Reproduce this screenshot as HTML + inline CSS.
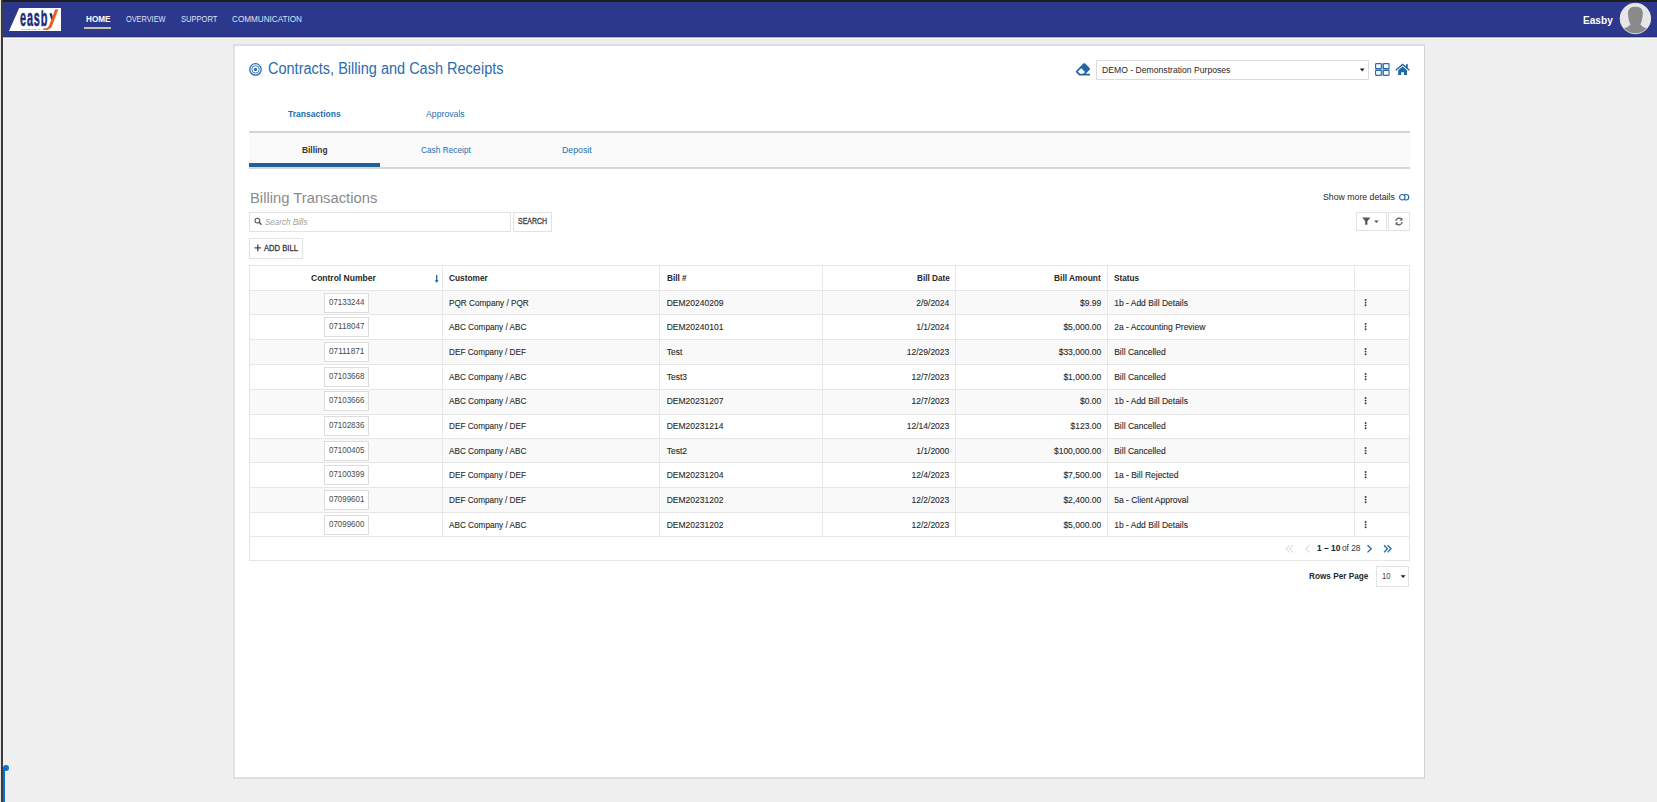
<!DOCTYPE html>
<html><head><meta charset="utf-8">
<style>
*{box-sizing:border-box}
html,body{margin:0;padding:0}
body{width:1657px;height:802px;overflow:hidden;position:relative;background:#efefef;font-family:"Liberation Sans",sans-serif;color:#333}
.a{position:absolute}
.t{position:absolute;white-space:nowrap;line-height:1.149;transform-origin:0 0}
#hdr{left:3px;top:2px;width:1654px;height:35px;background:#2c388c;border-bottom:1px solid #222f80}
#card{left:233px;top:44px;width:1192px;height:735px;background:#fff;border:2px solid #dedede;border-left-color:#e2e2e2;border-right:1px solid #d4d4d4}
.row{position:absolute;left:249px;width:1161px}
.hl{position:absolute;left:249px;width:1161px;height:1px;background:#e6e6e6}
.cbox{position:absolute;left:324px;width:45px;height:19px;border:1px solid #dcdcdc;background:#fff}
.dots{position:absolute;left:1364.8px;width:2px}
.dots i{display:block;width:1.8px;height:1.8px;background:#444;border-radius:50%;margin-bottom:0.8px}
.vl{position:absolute;width:1px;background:#e9e9e9}
.box{position:absolute;border:1px solid #e2e2e2;background:#fff}
</style></head><body>
<!-- frame -->
<div class="a" style="left:0;top:0;width:1657px;height:2px;background:#1e1e1e"></div>
<div class="a" style="left:0;top:0;width:1px;height:802px;background:#e6e6e6"></div>
<div class="a" style="left:1px;top:0;width:2px;height:802px;background:#3b3b3b"></div>
<div class="a" id="hdr"></div>
<div class="a" style="left:3px;top:37px;width:1654px;height:1px;background:#b4b8cf"></div>
<div class="a" style="left:3px;top:38px;width:1654px;height:1px;background:#fbfbf6"></div>
<!-- logo -->
<svg class="a" style="left:0;top:0" width="80" height="40" viewBox="0 0 80 40">
  <polygon points="19.2,8 61,8 61,31.1 9,31.1" fill="#ffffff"/>
  <clipPath id="lc"><rect x="0" y="10.2" width="80" height="30"/></clipPath>
  <g clip-path="url(#lc)">
    <text x="0" y="0" transform="translate(20.0 26.3) scale(0.5 1.1)" font-family="Liberation Sans" font-weight="bold" font-size="21.7" fill="#1a2a7c" stroke="#1a2a7c" stroke-width="0.5" letter-spacing="1.7">easb</text>
  </g>
  <path d="M49.4,13.2 L51.9,13.2 L53.2,18.6 L51.8,21.4 Z" fill="#1a2a7c"/>
  <path d="M55.1,9.5 L58.3,9.2 L52.2,25.6 Q50.9,29.6 46.4,29.9 L43,30.1 L43.6,28.6 L46.2,28.2 Q48.6,27.6 49.5,24.6 Z" fill="#f05a1e"/>
  <text x="20.8" y="29.7" font-family="Liberation Sans" font-size="2.4" fill="#5a66a8" textLength="20.8" lengthAdjust="spacingAndGlyphs">MAKES IT EASY</text>
</svg>
<div class="a" style="left:84.1px;top:27px;width:27px;height:2px;background:#c8c1ab"></div>
<!-- avatar -->
<svg class="a" style="left:1619px;top:2px" width="34" height="34" viewBox="0 0 34 34">
  <circle cx="16.4" cy="16.5" r="15.3" fill="#e6e6e6" stroke="#f2f2f2" stroke-width="0.8"/>
  <clipPath id="avc"><circle cx="16.4" cy="16.5" r="14.8"/></clipPath>
  <g clip-path="url(#avc)">
    <path fill="#8a8a8a" stroke="#f4f4f4" stroke-width="0.7" d="M16.4,4.2 C21.5,4.2 24.2,7 24.2,11.5 C24.2,16 22.8,20.4 21.8,22.4 C23,24.2 25.6,25.4 28.6,26.2 C30.5,27 31,30 31,34 L1.8,34 C1.8,30 2.3,27 4.2,26.2 C7.2,25.4 9.8,24.2 11,22.4 C10,20.4 8.6,16 8.6,11.5 C8.6,7 11.3,4.2 16.4,4.2 Z"/>
  </g>
</svg>
<!-- card -->
<div class="a" id="card"></div>
<!-- title icon -->
<svg class="a" style="left:248px;top:62px" width="15" height="15" viewBox="0 0 15 15">
  <circle cx="7.5" cy="7.4" r="5.7" fill="none" stroke="#2a6cae" stroke-width="1.3"/>
  <circle cx="7.5" cy="7.4" r="3.7" fill="none" stroke="#2a6cae" stroke-width="0.9"/>
  <circle cx="7.5" cy="7.4" r="1.7" fill="#2a6cae"/>
</svg>
<!-- eraser -->
<svg class="a" style="left:1070px;top:58px" width="24" height="22" viewBox="0 0 24 22">
  <g transform="translate(5.9 4.32) scale(0.02754)">
  <path fill="#2266a3" d="M497.941 273.941c18.745-18.745 18.745-49.137 0-67.882l-160-160c-18.745-18.745-49.136-18.746-67.883 0l-256 256c-18.745 18.745-18.745 49.137 0 67.882l96 96A48.004 48.004 0 0 0 144 480h356c6.627 0 12-5.373 12-12v-40c0-6.627-5.373-12-12-12H355.883l142.058-142.059zm-302.627-62.627l137.373 137.373L265.373 416H150.628l-80-80 124.686-124.686z"/>
  </g>
</svg>
<!-- select -->
<div class="box" style="left:1095.5px;top:60px;width:273.5px;height:20px;border-color:#dcdcdc"></div>
<svg class="a" style="left:1358px;top:66px" width="9" height="8" viewBox="0 0 9 8"><path d="M1.8,2.6 L6.6,2.6 L4.2,5.6 Z" fill="#222"/></svg>
<!-- grid icon -->
<svg class="a" style="left:1374px;top:62px" width="17" height="15" viewBox="0 0 17 15">
  <rect x="1.2" y="6.7" width="14.4" height="1.5" fill="#a8c2dc"/>
  <rect x="7.4" y="1.2" width="1.9" height="12.8" fill="#a8c2dc"/>
  <g fill="none" stroke="#2769a8" stroke-width="1.15">
    <rect x="1.6" y="1.6" width="5.7" height="5.0" rx="0.7"/>
    <rect x="9.3" y="1.6" width="5.7" height="5.0" rx="0.7"/>
    <rect x="1.6" y="8.3" width="5.7" height="5.0" rx="0.7"/>
    <rect x="9.3" y="8.3" width="5.7" height="5.0" rx="0.7"/>
  </g>
</svg>
<!-- home icon -->
<svg class="a" style="left:1395px;top:63px" width="16" height="13" viewBox="0 0 16 13">
  <path d="M0.8,7.2 L7.6,1.4 L14.4,7.2" fill="none" stroke="#2266a3" stroke-width="1.4"/>
  <rect x="11" y="1.2" width="1.8" height="3.6" fill="#2266a3"/>
  <path d="M3.2,7.2 L7.6,3.5 L12,7.2 L12,12.1 L9,12.1 L9,9.2 L6.2,9.2 L6.2,12.1 L3.2,12.1 Z" fill="#2266a3"/>
</svg>
<!-- tabs -->
<div class="a" style="left:248.6px;top:131px;width:1161.4px;height:2px;background:#d4d4d4"></div>
<div class="a" style="left:248.6px;top:133px;width:1161.4px;height:34px;background:#fafafa"></div>
<div class="a" style="left:248.6px;top:163px;width:131.4px;height:4px;background:#1e5f9c"></div>
<div class="a" style="left:248.6px;top:167px;width:1161.4px;height:2px;background:#d6d6d6"></div>
<!-- search -->
<div class="box" style="left:249px;top:211.7px;width:262px;height:20px"></div>
<svg class="a" style="left:253px;top:216px" width="10" height="10" viewBox="0 0 10 10">
  <circle cx="4.4" cy="4.6" r="2.4" fill="none" stroke="#555" stroke-width="1.1"/>
  <path d="M6.1,6.3 L8,8.2" stroke="#555" stroke-width="1.5" stroke-linecap="round"/>
</svg>
<div class="box" style="left:513.3px;top:211.8px;width:38.6px;height:20px"></div>
<div class="box" style="left:249px;top:238.4px;width:53.6px;height:20.4px"></div>
<svg class="a" style="left:253px;top:243px" width="10" height="10" viewBox="0 0 10 10">
  <path d="M4.8,1.6 V8.2 M1.6,4.9 H8" stroke="#444" stroke-width="1.3"/>
</svg>
<!-- show more toggle -->
<svg class="a" style="left:1398px;top:192px" width="13" height="10" viewBox="0 0 13 10">
  <circle cx="8.0" cy="5.2" r="2.75" fill="none" stroke="#2266a3" stroke-width="1.1"/>
  <circle cx="4.3" cy="5.2" r="2.75" fill="#fff" stroke="#2266a3" stroke-width="1.1"/>
</svg>
<!-- filter & refresh -->
<div class="box" style="left:1356px;top:212px;width:30.5px;height:19px"></div>
<svg class="a" style="left:1361px;top:216px" width="20" height="10" viewBox="0 0 20 10">
  <path d="M1.2,1.6 L9.4,1.6 L6.4,5.2 L6.4,8.8 L4.2,8.8 L4.2,5.2 Z" fill="#555"/>
  <path d="M13,4.4 L17.8,4.4 L15.4,7 Z" fill="#555"/>
</svg>
<div class="box" style="left:1388px;top:212px;width:21.5px;height:19px"></div>
<svg class="a" style="left:1394px;top:217px" width="10" height="9" viewBox="0 0 10 9">
  <path d="M1.8,4 A3.4,3.4 0 0 1 8,2.6" fill="none" stroke="#555" stroke-width="1.2"/>
  <path d="M8.4,0.8 L8.4,3.6 L5.6,3.6 Z" fill="#555"/>
  <path d="M8.2,5 A3.4,3.4 0 0 1 2,6.4" fill="none" stroke="#555" stroke-width="1.2"/>
  <path d="M1.6,8.2 L1.6,5.4 L4.4,5.4 Z" fill="#555"/>
</svg>
<!-- table -->
<div class="a" style="left:249px;top:265px;width:1161px;height:296px;border:1px solid #e6e6e6;background:#fff"></div>
<div class="row" style="top:290px;height:24px;background:#f9f9f9"></div>
<div class="row" style="top:314px;height:25px;background:#ffffff"></div>
<div class="row" style="top:339px;height:25px;background:#f9f9f9"></div>
<div class="row" style="top:364px;height:25px;background:#ffffff"></div>
<div class="row" style="top:389px;height:25px;background:#f9f9f9"></div>
<div class="row" style="top:414px;height:24px;background:#ffffff"></div>
<div class="row" style="top:438px;height:24px;background:#f9f9f9"></div>
<div class="row" style="top:462px;height:25px;background:#ffffff"></div>
<div class="row" style="top:487px;height:25px;background:#f9f9f9"></div>
<div class="row" style="top:512px;height:24px;background:#ffffff"></div>
<div class="hl" style="top:290px"></div>
<div class="hl" style="top:314px"></div>
<div class="hl" style="top:339px"></div>
<div class="hl" style="top:364px"></div>
<div class="hl" style="top:389px"></div>
<div class="hl" style="top:414px"></div>
<div class="hl" style="top:438px"></div>
<div class="hl" style="top:462px"></div>
<div class="hl" style="top:487px"></div>
<div class="hl" style="top:512px"></div>
<div class="hl" style="top:536px"></div>
<div class="cbox" style="top:292.9px;height:19.8px"></div>
<svg class="a" style="left:1363px;top:299px" width="5" height="8" viewBox="0 0 5 8"><circle cx="2.6" cy="1.0" r="0.95" fill="#3a3a3a"/><circle cx="2.6" cy="3.6" r="0.95" fill="#3a3a3a"/><circle cx="2.6" cy="6.2" r="0.95" fill="#3a3a3a"/></svg>
<div class="cbox" style="top:316.9px;height:19.8px"></div>
<svg class="a" style="left:1363px;top:323px" width="5" height="8" viewBox="0 0 5 8"><circle cx="2.6" cy="1.0" r="0.95" fill="#3a3a3a"/><circle cx="2.6" cy="3.6" r="0.95" fill="#3a3a3a"/><circle cx="2.6" cy="6.2" r="0.95" fill="#3a3a3a"/></svg>
<div class="cbox" style="top:341.9px;height:19.8px"></div>
<svg class="a" style="left:1363px;top:348px" width="5" height="8" viewBox="0 0 5 8"><circle cx="2.6" cy="1.0" r="0.95" fill="#3a3a3a"/><circle cx="2.6" cy="3.6" r="0.95" fill="#3a3a3a"/><circle cx="2.6" cy="6.2" r="0.95" fill="#3a3a3a"/></svg>
<div class="cbox" style="top:366.9px;height:19.8px"></div>
<svg class="a" style="left:1363px;top:373px" width="5" height="8" viewBox="0 0 5 8"><circle cx="2.6" cy="1.0" r="0.95" fill="#3a3a3a"/><circle cx="2.6" cy="3.6" r="0.95" fill="#3a3a3a"/><circle cx="2.6" cy="6.2" r="0.95" fill="#3a3a3a"/></svg>
<div class="cbox" style="top:390.9px;height:19.8px"></div>
<svg class="a" style="left:1363px;top:397px" width="5" height="8" viewBox="0 0 5 8"><circle cx="2.6" cy="1.0" r="0.95" fill="#3a3a3a"/><circle cx="2.6" cy="3.6" r="0.95" fill="#3a3a3a"/><circle cx="2.6" cy="6.2" r="0.95" fill="#3a3a3a"/></svg>
<div class="cbox" style="top:415.9px;height:19.8px"></div>
<svg class="a" style="left:1363px;top:422px" width="5" height="8" viewBox="0 0 5 8"><circle cx="2.6" cy="1.0" r="0.95" fill="#3a3a3a"/><circle cx="2.6" cy="3.6" r="0.95" fill="#3a3a3a"/><circle cx="2.6" cy="6.2" r="0.95" fill="#3a3a3a"/></svg>
<div class="cbox" style="top:440.9px;height:19.8px"></div>
<svg class="a" style="left:1363px;top:447px" width="5" height="8" viewBox="0 0 5 8"><circle cx="2.6" cy="1.0" r="0.95" fill="#3a3a3a"/><circle cx="2.6" cy="3.6" r="0.95" fill="#3a3a3a"/><circle cx="2.6" cy="6.2" r="0.95" fill="#3a3a3a"/></svg>
<div class="cbox" style="top:464.9px;height:19.8px"></div>
<svg class="a" style="left:1363px;top:471px" width="5" height="8" viewBox="0 0 5 8"><circle cx="2.6" cy="1.0" r="0.95" fill="#3a3a3a"/><circle cx="2.6" cy="3.6" r="0.95" fill="#3a3a3a"/><circle cx="2.6" cy="6.2" r="0.95" fill="#3a3a3a"/></svg>
<div class="cbox" style="top:489.9px;height:19.8px"></div>
<svg class="a" style="left:1363px;top:496px" width="5" height="8" viewBox="0 0 5 8"><circle cx="2.6" cy="1.0" r="0.95" fill="#3a3a3a"/><circle cx="2.6" cy="3.6" r="0.95" fill="#3a3a3a"/><circle cx="2.6" cy="6.2" r="0.95" fill="#3a3a3a"/></svg>
<div class="cbox" style="top:514.9px;height:19.8px"></div>
<svg class="a" style="left:1363px;top:521px" width="5" height="8" viewBox="0 0 5 8"><circle cx="2.6" cy="1.0" r="0.95" fill="#3a3a3a"/><circle cx="2.6" cy="3.6" r="0.95" fill="#3a3a3a"/><circle cx="2.6" cy="6.2" r="0.95" fill="#3a3a3a"/></svg>
<div class="vl" style="left:442px;top:266px;height:271px"></div>
<div class="vl" style="left:659px;top:266px;height:271px"></div>
<div class="vl" style="left:822px;top:266px;height:271px"></div>
<div class="vl" style="left:955px;top:266px;height:271px"></div>
<div class="vl" style="left:1107px;top:266px;height:271px"></div>
<div class="vl" style="left:1354px;top:266px;height:271px"></div>
<div class="a" style="left:249px;top:265px;width:1px;height:296px;background:#e4e4e4"></div>
<div class="a" style="left:1409px;top:265px;width:1px;height:296px;background:#e4e4e4"></div>
<!-- sort arrow -->
<svg class="a" style="left:433px;top:274px" width="8" height="10" viewBox="0 0 8 10">
  <path d="M3.7,1 V7.4" stroke="#2266a3" stroke-width="1.3"/>
  <path d="M1.6,6.2 L5.8,6.2 L3.7,8.8 Z" fill="#2266a3"/>
</svg>
<!-- pager -->
<svg class="a" style="left:1283px;top:543px" width="112" height="12" viewBox="0 0 112 12">
  <path d="M6.5,2.2 L3.2,5.8 L6.5,9.4 M9.8,2.2 L6.5,5.8 L9.8,9.4" fill="none" stroke="#cfcfcf" stroke-width="1"/>
  <path d="M26.6,2.2 L22.8,5.8 L26.6,9.4" fill="none" stroke="#cfcfcf" stroke-width="1"/>
  <path d="M84.5,2.2 L88.3,5.8 L84.5,9.4" fill="none" stroke="#2266a3" stroke-width="1.3"/>
  <path d="M101,2.2 L104.4,5.8 L101,9.4 M104.6,2.2 L108,5.8 L104.6,9.4" fill="none" stroke="#2266a3" stroke-width="1.3"/>
</svg>
<!-- rows per page select -->
<div class="box" style="left:1376.3px;top:566.2px;width:33.2px;height:20.6px"></div>
<svg class="a" style="left:1399px;top:573px" width="8" height="7" viewBox="0 0 8 7"><path d="M1.6,2.2 L6.6,2.2 L4.1,5 Z" fill="#222"/></svg>
<!-- bottom-left blue marker -->
<div class="a" style="left:3px;top:768px;width:2px;height:34px;background:#0a6fd6"></div>
<div class="a" style="left:3.1px;top:765px;width:5.8px;height:5.8px;border-radius:50%;background:#0a6fd6"></div>
<div class="t" style="left:85.70px;top:14.30px;font-size:8.9px;color:#ffffff;font-weight:bold;transform:scaleX(0.9202);">HOME</div>
<div class="t" style="left:126.20px;top:14.30px;font-size:8.9px;color:#dfe3f3;transform:scaleX(0.8286);">OVERVIEW</div>
<div class="t" style="left:181.00px;top:14.30px;font-size:8.9px;color:#dfe3f3;transform:scaleX(0.8516);">SUPPORT</div>
<div class="t" style="left:232.00px;top:14.30px;font-size:8.9px;color:#dfe3f3;transform:scaleX(0.9180);">COMMUNICATION</div>
<div class="t" style="left:1582.50px;top:13.64px;font-size:10.6px;color:#ffffff;font-weight:bold;transform:scaleX(0.9548);">Easby</div>
<div class="t" style="left:267.80px;top:59.73px;font-size:15.6px;color:#2a6cae;transform:scaleX(0.9305);">Contracts, Billing and Cash Receipts</div>
<div class="t" style="left:1101.50px;top:66.16px;font-size:8.4px;color:#282828;transform:scaleX(1.0294);">DEMO - Demonstration Purposes</div>
<div class="t" style="left:288.20px;top:109.33px;font-size:9.2px;color:#2670b0;font-weight:bold;transform:scaleX(0.9298);">Transactions</div>
<div class="t" style="left:426.00px;top:109.33px;font-size:9.2px;color:#2670b0;transform:scaleX(0.9473);">Approvals</div>
<div class="t" style="left:301.80px;top:145.15px;font-size:9.5px;color:#333;font-weight:bold;transform:scaleX(0.8786);">Billing</div>
<div class="t" style="left:420.70px;top:145.11px;font-size:9.0px;color:#2670b0;transform:scaleX(0.9218);">Cash Receipt</div>
<div class="t" style="left:561.90px;top:145.11px;font-size:9.0px;color:#2670b0;transform:scaleX(0.9733);">Deposit</div>
<div class="t" style="left:249.80px;top:189.42px;font-size:15.5px;color:#8a8a8a;transform:scaleX(0.9535);">Billing Transactions</div>
<div class="t" style="left:265.40px;top:216.50px;font-size:8.8px;color:#a0a0a0;font-style:italic;transform:scaleX(0.9129);">Search Bills</div>
<div class="t" style="left:518.10px;top:216.86px;font-size:8.4px;color:#3a3a3a;transform:scaleX(0.8309);-webkit-text-stroke:0.3px #3a3a3a;">SEARCH</div>
<div class="t" style="left:264.40px;top:243.10px;font-size:8.8px;color:#3a3a3a;transform:scaleX(0.8693);-webkit-text-stroke:0.3px #3a3a3a;">ADD BILL</div>
<div class="t" style="left:1323.10px;top:192.77px;font-size:8.5px;color:#282828;transform:scaleX(1.0269);">Show more details</div>
<div class="t" style="left:311.30px;top:273.10px;font-size:8.8px;color:#282828;font-weight:bold;transform:scaleX(0.9664);">Control Number</div>
<div class="t" style="left:449.20px;top:273.10px;font-size:8.8px;color:#282828;font-weight:bold;transform:scaleX(0.9450);">Customer</div>
<div class="t" style="left:667.00px;top:273.10px;font-size:8.8px;color:#282828;font-weight:bold;transform:scaleX(0.9371);">Bill #</div>
<div class="t" style="left:916.50px;top:273.10px;font-size:8.8px;color:#282828;font-weight:bold;transform:scaleX(0.9319);">Bill Date</div>
<div class="t" style="left:1054.20px;top:273.10px;font-size:8.8px;color:#282828;font-weight:bold;transform:scaleX(0.9523);">Bill Amount</div>
<div class="t" style="left:1113.90px;top:273.10px;font-size:8.8px;color:#282828;font-weight:bold;transform:scaleX(0.9373);">Status</div>
<div class="t" style="left:328.60px;top:298.18px;font-size:8.6px;color:#4a4a4a;transform:scaleX(0.9258);">07133244</div>
<div class="t" style="left:449.30px;top:298.87px;font-size:8.5px;color:#282828;-webkit-text-stroke:0.1px #282828;transform:scaleX(0.964);">PQR Company / PQR</div>
<div class="t" style="left:666.70px;top:298.87px;font-size:8.5px;color:#282828;-webkit-text-stroke:0.1px #282828;">DEM20240209</div>
<div class="t" style="left:916.21px;top:298.87px;font-size:8.5px;color:#282828;-webkit-text-stroke:0.1px #282828;">2/9/2024</div>
<div class="t" style="left:1079.93px;top:298.87px;font-size:8.5px;color:#282828;-webkit-text-stroke:0.1px #282828;">$9.99</div>
<div class="t" style="left:1114.20px;top:298.87px;font-size:8.5px;color:#282828;-webkit-text-stroke:0.1px #282828;">1b - Add Bill Details</div>
<div class="t" style="left:328.60px;top:322.18px;font-size:8.6px;color:#4a4a4a;transform:scaleX(0.9416);">07118047</div>
<div class="t" style="left:449.30px;top:322.87px;font-size:8.5px;color:#282828;-webkit-text-stroke:0.1px #282828;transform:scaleX(0.964);">ABC Company / ABC</div>
<div class="t" style="left:666.70px;top:322.87px;font-size:8.5px;color:#282828;-webkit-text-stroke:0.1px #282828;">DEM20240101</div>
<div class="t" style="left:916.21px;top:322.87px;font-size:8.5px;color:#282828;-webkit-text-stroke:0.1px #282828;">1/1/2024</div>
<div class="t" style="left:1063.39px;top:322.87px;font-size:8.5px;color:#282828;-webkit-text-stroke:0.1px #282828;">$5,000.00</div>
<div class="t" style="left:1114.20px;top:322.87px;font-size:8.5px;color:#282828;-webkit-text-stroke:0.1px #282828;">2a - Accounting Preview</div>
<div class="t" style="left:328.60px;top:347.18px;font-size:8.6px;color:#4a4a4a;transform:scaleX(0.9578);">07111871</div>
<div class="t" style="left:449.30px;top:347.87px;font-size:8.5px;color:#282828;-webkit-text-stroke:0.1px #282828;transform:scaleX(0.964);">DEF Company / DEF</div>
<div class="t" style="left:666.70px;top:347.87px;font-size:8.5px;color:#282828;-webkit-text-stroke:0.1px #282828;">Test</div>
<div class="t" style="left:906.76px;top:347.87px;font-size:8.5px;color:#282828;-webkit-text-stroke:0.1px #282828;">12/29/2023</div>
<div class="t" style="left:1058.66px;top:347.87px;font-size:8.5px;color:#282828;-webkit-text-stroke:0.1px #282828;">$33,000.00</div>
<div class="t" style="left:1114.20px;top:347.87px;font-size:8.5px;color:#282828;-webkit-text-stroke:0.1px #282828;">Bill Cancelled</div>
<div class="t" style="left:328.60px;top:372.18px;font-size:8.6px;color:#4a4a4a;transform:scaleX(0.9258);">07103668</div>
<div class="t" style="left:449.30px;top:372.87px;font-size:8.5px;color:#282828;-webkit-text-stroke:0.1px #282828;transform:scaleX(0.964);">ABC Company / ABC</div>
<div class="t" style="left:666.70px;top:372.87px;font-size:8.5px;color:#282828;-webkit-text-stroke:0.1px #282828;">Test3</div>
<div class="t" style="left:911.49px;top:372.87px;font-size:8.5px;color:#282828;-webkit-text-stroke:0.1px #282828;">12/7/2023</div>
<div class="t" style="left:1063.39px;top:372.87px;font-size:8.5px;color:#282828;-webkit-text-stroke:0.1px #282828;">$1,000.00</div>
<div class="t" style="left:1114.20px;top:372.87px;font-size:8.5px;color:#282828;-webkit-text-stroke:0.1px #282828;">Bill Cancelled</div>
<div class="t" style="left:328.60px;top:396.18px;font-size:8.6px;color:#4a4a4a;transform:scaleX(0.9258);">07103666</div>
<div class="t" style="left:449.30px;top:396.87px;font-size:8.5px;color:#282828;-webkit-text-stroke:0.1px #282828;transform:scaleX(0.964);">ABC Company / ABC</div>
<div class="t" style="left:666.70px;top:396.87px;font-size:8.5px;color:#282828;-webkit-text-stroke:0.1px #282828;">DEM20231207</div>
<div class="t" style="left:911.49px;top:396.87px;font-size:8.5px;color:#282828;-webkit-text-stroke:0.1px #282828;">12/7/2023</div>
<div class="t" style="left:1079.93px;top:396.87px;font-size:8.5px;color:#282828;-webkit-text-stroke:0.1px #282828;">$0.00</div>
<div class="t" style="left:1114.20px;top:396.87px;font-size:8.5px;color:#282828;-webkit-text-stroke:0.1px #282828;">1b - Add Bill Details</div>
<div class="t" style="left:328.60px;top:421.18px;font-size:8.6px;color:#4a4a4a;transform:scaleX(0.9258);">07102836</div>
<div class="t" style="left:449.30px;top:421.87px;font-size:8.5px;color:#282828;-webkit-text-stroke:0.1px #282828;transform:scaleX(0.964);">DEF Company / DEF</div>
<div class="t" style="left:666.70px;top:421.87px;font-size:8.5px;color:#282828;-webkit-text-stroke:0.1px #282828;">DEM20231214</div>
<div class="t" style="left:906.76px;top:421.87px;font-size:8.5px;color:#282828;-webkit-text-stroke:0.1px #282828;">12/14/2023</div>
<div class="t" style="left:1070.47px;top:421.87px;font-size:8.5px;color:#282828;-webkit-text-stroke:0.1px #282828;">$123.00</div>
<div class="t" style="left:1114.20px;top:421.87px;font-size:8.5px;color:#282828;-webkit-text-stroke:0.1px #282828;">Bill Cancelled</div>
<div class="t" style="left:328.60px;top:446.18px;font-size:8.6px;color:#4a4a4a;transform:scaleX(0.9258);">07100405</div>
<div class="t" style="left:449.30px;top:446.87px;font-size:8.5px;color:#282828;-webkit-text-stroke:0.1px #282828;transform:scaleX(0.964);">ABC Company / ABC</div>
<div class="t" style="left:666.70px;top:446.87px;font-size:8.5px;color:#282828;-webkit-text-stroke:0.1px #282828;">Test2</div>
<div class="t" style="left:916.21px;top:446.87px;font-size:8.5px;color:#282828;-webkit-text-stroke:0.1px #282828;">1/1/2000</div>
<div class="t" style="left:1053.93px;top:446.87px;font-size:8.5px;color:#282828;-webkit-text-stroke:0.1px #282828;">$100,000.00</div>
<div class="t" style="left:1114.20px;top:446.87px;font-size:8.5px;color:#282828;-webkit-text-stroke:0.1px #282828;">Bill Cancelled</div>
<div class="t" style="left:328.60px;top:470.18px;font-size:8.6px;color:#4a4a4a;transform:scaleX(0.9258);">07100399</div>
<div class="t" style="left:449.30px;top:470.87px;font-size:8.5px;color:#282828;-webkit-text-stroke:0.1px #282828;transform:scaleX(0.964);">DEF Company / DEF</div>
<div class="t" style="left:666.70px;top:470.87px;font-size:8.5px;color:#282828;-webkit-text-stroke:0.1px #282828;">DEM20231204</div>
<div class="t" style="left:911.49px;top:470.87px;font-size:8.5px;color:#282828;-webkit-text-stroke:0.1px #282828;">12/4/2023</div>
<div class="t" style="left:1063.39px;top:470.87px;font-size:8.5px;color:#282828;-webkit-text-stroke:0.1px #282828;">$7,500.00</div>
<div class="t" style="left:1114.20px;top:470.87px;font-size:8.5px;color:#282828;-webkit-text-stroke:0.1px #282828;">1a - Bill Rejected</div>
<div class="t" style="left:328.60px;top:495.18px;font-size:8.6px;color:#4a4a4a;transform:scaleX(0.9258);">07099601</div>
<div class="t" style="left:449.30px;top:495.87px;font-size:8.5px;color:#282828;-webkit-text-stroke:0.1px #282828;transform:scaleX(0.964);">DEF Company / DEF</div>
<div class="t" style="left:666.70px;top:495.87px;font-size:8.5px;color:#282828;-webkit-text-stroke:0.1px #282828;">DEM20231202</div>
<div class="t" style="left:911.49px;top:495.87px;font-size:8.5px;color:#282828;-webkit-text-stroke:0.1px #282828;">12/2/2023</div>
<div class="t" style="left:1063.39px;top:495.87px;font-size:8.5px;color:#282828;-webkit-text-stroke:0.1px #282828;">$2,400.00</div>
<div class="t" style="left:1114.20px;top:495.87px;font-size:8.5px;color:#282828;-webkit-text-stroke:0.1px #282828;">5a - Client Approval</div>
<div class="t" style="left:328.60px;top:520.18px;font-size:8.6px;color:#4a4a4a;transform:scaleX(0.9258);">07099600</div>
<div class="t" style="left:449.30px;top:520.87px;font-size:8.5px;color:#282828;-webkit-text-stroke:0.1px #282828;transform:scaleX(0.964);">ABC Company / ABC</div>
<div class="t" style="left:666.70px;top:520.87px;font-size:8.5px;color:#282828;-webkit-text-stroke:0.1px #282828;">DEM20231202</div>
<div class="t" style="left:911.49px;top:520.87px;font-size:8.5px;color:#282828;-webkit-text-stroke:0.1px #282828;">12/2/2023</div>
<div class="t" style="left:1063.39px;top:520.87px;font-size:8.5px;color:#282828;-webkit-text-stroke:0.1px #282828;">$5,000.00</div>
<div class="t" style="left:1114.20px;top:520.87px;font-size:8.5px;color:#282828;-webkit-text-stroke:0.1px #282828;">1b - Add Bill Details</div>
<div class="t" style="left:1317.00px;top:544.06px;font-size:8.4px;color:#222;font-weight:bold;">1 – 10</div>
<div class="t" style="left:1341.90px;top:544.06px;font-size:8.4px;color:#333;">of 28</div>
<div class="t" style="left:1308.90px;top:572.26px;font-size:8.4px;color:#282828;font-weight:bold;transform:scaleX(0.9800);">Rows Per Page</div>
<div class="t" style="left:1381.80px;top:572.08px;font-size:8.6px;color:#444;transform:scaleX(0.8997);">10</div>
</body></html>
